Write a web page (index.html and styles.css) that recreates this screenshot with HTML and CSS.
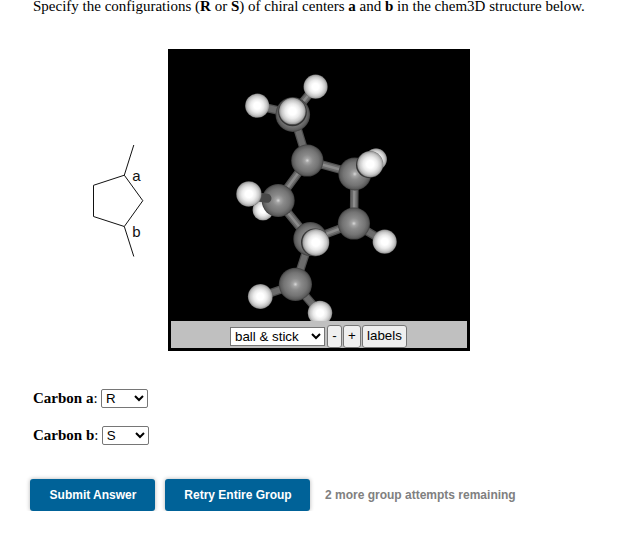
FILE: index.html
```html
<!DOCTYPE html>
<html lang="en">
  <head>
    <meta charset="utf-8">
    <title>Chiral Centers</title>
    <link rel="stylesheet" href="styles.css">
  </head>
  <body>
    <p class="prompt">Specify the configurations (<b>R</b> or <b>S</b>) of chiral centers <b>a</b> and <b>b</b> in the chem3D structure below.</p>

    <div class="figures">
      <svg class="skeleton" width="52" height="114" viewBox="92 143 52 114">
        <g fill="none" stroke="#111" stroke-width="1">
          <path d="M124.3 175.2L142.8 200.7L124.3 226.5L93.5 216.5V185.3Z" />
          <path d="M124.3 175.2L133.8 145M124.3 226.5L133.8 256.5" />
        </g>
        <text x="132.3" y="181.3">a</text>
        <text x="132.3" y="237">b</text>
      </svg>

      <div class="viewer">
        <svg class="molecule" viewBox="171 52 296 269">
          <defs>
            <radialGradient id="carbon">
              <stop offset="0" stop-color="#d8d8d8" />
              <stop offset="0.14" stop-color="#a4a4a4" />
              <stop offset="0.35" stop-color="#8a8a8a" />
              <stop offset="0.7" stop-color="#747474" />
              <stop offset="0.9" stop-color="#5c5c5c" />
              <stop offset="1" stop-color="#3c3c3c" />
            </radialGradient>
            <radialGradient id="hydrogen">
              <stop offset="0" stop-color="#fff" />
              <stop offset="0.28" stop-color="#fff" />
              <stop offset="0.55" stop-color="#ebebeb" />
              <stop offset="0.8" stop-color="#c8c8c8" />
              <stop offset="0.93" stop-color="#a4a4a4" />
              <stop offset="1" stop-color="#707070" />
            </radialGradient>
          </defs>

          <!-- bonds -->
          <g class="bond-edge">
            <path d="M257 105.5L293 114M315.5 86.5L293 114M293 114L307.3 160.5L354.5 173.5L354 223.5L310 240L278 200.5L307.3 160.5" />
            <path d="M354 223.5L384.5 241.5M310 240L295.5 284.5L260.5 296.5M295.5 284.5L320 313" />
          </g>
          <g class="bond-body">
            <path d="M257 105.5L293 114M315.5 86.5L293 114M293 114L307.3 160.5L354.5 173.5L354 223.5L310 240L278 200.5L307.3 160.5" />
            <path d="M354 223.5L384.5 241.5M310 240L295.5 284.5L260.5 296.5M295.5 284.5L320 313" />
          </g>
          <g class="bond-shine">
            <path d="M315.5 86.5L293 114M307.3 160.5L354.5 173.5L354 223.5L310 240L278 200.5L307.3 160.5" />
          </g>

          <!-- atoms, back to front -->
          <g fill="url(#hydrogen)">
            <circle cx="376" cy="159.3" r="10.8" />
            <circle cx="263" cy="210" r="10.5" />
            <circle cx="257.2" cy="105.7" r="12.1" />
            <circle cx="315.6" cy="86.7" r="12.1" />
          </g>
          <g fill="url(#carbon)">
            <circle cx="292.8" cy="114.6" r="17.3" />
            <circle cx="307.3" cy="160.5" r="16.1" />
            <circle cx="354.8" cy="174" r="16.4" />
            <circle cx="278.2" cy="200.5" r="16.5" />
            <circle cx="353.9" cy="223.5" r="16.1" />
            <circle cx="310.3" cy="239" r="17" />
            <circle cx="295.4" cy="284.3" r="16.6" />
          </g>
          <path class="bond-short" d="M260 197.2L267 198.3" />
          <g fill="#333">
            <circle cx="292.5" cy="112" r="14.3" />
            <circle cx="315" cy="242.4" r="14" />
            <circle cx="369" cy="165" r="13" />
          </g>
          <g fill="url(#hydrogen)">
            <circle cx="376" cy="159.3" r="10.8" />
            <circle cx="292.4" cy="111.2" r="13.4" />
            <circle cx="370.2" cy="164.2" r="13.1" />
            <circle cx="248.9" cy="194" r="12.7" />
            <circle cx="315.8" cy="242.4" r="13.5" />
            <circle cx="384.7" cy="241.7" r="12.1" />
            <circle cx="260.3" cy="296.5" r="12.4" />
            <circle cx="320" cy="313" r="12.3" />
          </g>
        </svg>
        <div class="toolbar">
          <select class="style-select">
            <option>ball &amp; stick</option>
            <option>wireframe</option>
            <option>spacefill</option>
          </select>
          <button class="tool zoom-out">-</button>
          <button class="tool zoom-in">+</button>
          <button class="tool show-labels">labels</button>
        </div>
      </div>
    </div>

    <div class="answer">
      <label for="carbon-a"><b>Carbon a</b>:</label>
      <select id="carbon-a">
        <option>R</option>
        <option>S</option>
      </select>
    </div>
    <div class="answer">
      <label for="carbon-b"><b>Carbon b</b>:</label>
      <select id="carbon-b">
        <option>S</option>
        <option>R</option>
      </select>
    </div>

    <div class="actions">
      <button class="primary submit">Submit Answer</button>
      <button class="primary retry">Retry Entire Group</button>
      <span class="attempts">2 more group attempts remaining</span>
    </div>
  </body>
</html>
```
FILE: styles.css
```css
* {
  box-sizing: border-box;
}

body {
  margin: 0;
  padding: 0 30px;
  background: white;
  color: black;
  font-family: "Liberation Serif", "Times New Roman", serif;
  font-size: 15px;
  overflow: hidden;
}

.prompt {
  margin: 0 0 0 3px;
  height: 49px;
  line-height: 13px;
  font-size: 15px;
  white-space: nowrap;
}

.figures {
  display: flex;
  align-items: center;
  gap: 24px;
  height: 302px;
  margin-bottom: 38px;
  padding-left: 62px;
}

.skeleton text {
  font-family: "Liberation Sans", Arial, sans-serif;
  font-size: 15px;
  fill: #111;
}

.viewer {
  width: 302px;
  height: 302px;
  border: 3px solid black;
  background: black;
}

.molecule {
  display: block;
  width: 296px;
  height: 269px;
}

.bond-edge,
.bond-body,
.bond-shine {
  fill: none;
}

.bond-edge {
  stroke: #505050;
  stroke-width: 8.5;
}

.bond-body {
  stroke: #6c6c6c;
  stroke-width: 6;
}

.bond-shine {
  stroke: #8c8c8c;
  stroke-width: 2.5;
}

.bond-short {
  stroke: #484848;
  stroke-width: 9;
  stroke-linecap: round;
}

.toolbar {
  display: flex;
  height: 27px;
  padding: 4px 0 0 59px;
  background: #c0c0c0;
}

select {
  height: 19px;
  border: 1px solid #767676;
  border-radius: 2px;
  background-color: white;
  color: black;
  font-family: "Liberation Sans", Arial, sans-serif;
  font-size: 13.33px;
}

.style-select {
  width: 95px;
  margin: 2px 2px 0 0;
  border-radius: 0;
}

.tool {
  height: 23px;
  margin-right: 1px;
  padding: 0 0 2px;
  border: 1px solid #767676;
  border-radius: 3px;
  background: #efefef;
  color: black;
  font-family: "Liberation Sans", Arial, sans-serif;
  font-size: 13.33px;
}

.zoom-out {
  width: 15px;
}

.zoom-in {
  width: 18px;
}

.show-labels {
  width: 45px;
}

.answer {
  display: flex;
  align-items: center;
  gap: 3.3px;
  height: 19px;
  margin: 0 0 18px 3px;
}

.answer select {
  width: 47px;
}

.actions {
  display: flex;
  align-items: center;
  margin-top: 34px;
  font-family: "Liberation Sans", Arial, sans-serif;
  font-size: 12px;
  font-weight: bold;
}

.primary {
  height: 32px;
  margin-right: 10px;
  padding: 0 0 0 1px;
  border: none;
  border-radius: 3px;
  background: #006298;
  box-shadow: 0 0 4px rgba(0, 0, 0, 0.3);
  color: white;
  font: inherit;
}

.submit {
  width: 125px;
}

.retry {
  width: 145px;
  margin-right: 15px;
}

.attempts {
  color: #808080;
}
```
